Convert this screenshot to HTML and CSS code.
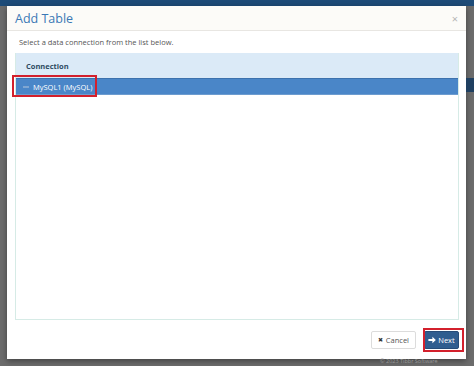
FILE: index.html
```html
<html>
<head>
    <title>Add Table</title>
    <link rel="stylesheet" href="styles.css">
</head>
<body>

<div class="topbar"></div>

<div class="modal">

    <div class="modal-header">
        <h2>Add Table</h2>
        <span class="close">&times;</span>
    </div>

    <div class="modal-body">
        <p class="hint">Select a data connection from the list below.</p>

        <div class="grid">
            <div class="grid-head">Connection</div>
            <div class="grid-row selected">
                <span class="db-icon"></span>
                <span>MySQL1 (MySQL)</span>
            </div>
            <div class="mark mark-row"></div>
        </div>
    </div>

    <div class="modal-footer">
        <button class="btn btn-cancel"><span class="x">&#10006;</span> Cancel</button>
        <button class="btn btn-next">
            <svg class="arrow" width="8" height="8" viewBox="0 0 10 10"><path d="M0.5 3.6h5V0.8L9.8 5 5.5 9.2V6.4h-5z" fill="#fff"/></svg>
            Next
        </button>
        <div class="mark mark-next"></div>
    </div>

</div>

<div class="side-tab"></div>
<div class="bottom-text">&copy; 2023 Tibbr Software</div>

</body>
</html>
```

FILE: styles.css
```css
body
{
    margin: 0;
    width: 474px;
    height: 366px;
    overflow: hidden;
    background-color: #6c6c6c;
    font-family: 'Open Sans', 'DejaVu Sans', sans-serif;
    position: relative;
}

.topbar
{
    height: 6px;
    background-color: #1d4b78;
}

.modal
{
    margin-left: 7px;
    width: 459px;
    height: 353px;
    background-color: #fff;
    display: flex;
    flex-direction: column;
    box-shadow: 0 2px 6px rgba(0, 0, 0, 0.4);
}

.modal-header
{
    height: 24px;
    background-color: #fcfbf8;
    border-bottom: 1px solid #e8e6e2;
    display: flex;
    align-items: center;
    justify-content: space-between;
    padding: 0 8px 0 8px;
}

h2
{
    margin: 0;
    font-size: 12.5px;
    font-weight: 400;
    color: #3a78b5;
}

.close
{
    font-size: 11px;
    color: #b5b5b5;
}

.modal-body
{
    padding: 0 7px 0 8px;
    flex: 1;
}

.hint
{
    margin: 6px 0 5px 4px;
    font-size: 7.5px;
    color: #555;
    line-height: 11px;
}

.grid
{
    position: relative;
    height: 266px;
    border: 1px solid #d6ebe6;
    border-top: none;
}

.grid-head
{
    height: 25px;
    background-color: #dbeaf7;
    font-size: 7.5px;
    font-weight: bold;
    color: #2e4a62;
    display: flex;
    align-items: center;
    padding-left: 10px;
}

.grid-row
{
    height: 15px;
    display: flex;
    align-items: center;
    font-size: 7.5px;
    padding-left: 7px;
    gap: 4px;
}

.selected
{
    background-color: #4a86c8;
    color: #fff;
    border-top: 1px solid #3d72ad;
    border-bottom: 1px solid #6d9ccf;
}

.db-icon
{
    width: 6px;
    height: 2px;
    background-color: #7fa6d2;
}

.mark
{
    position: absolute;
    border: 2px solid #d3202c;
}

.mark-row
{
    left: -4px;
    top: 22px;
    width: 81px;
    height: 18px;
}

.modal-footer
{
    position: relative;
    height: 39px;
    display: flex;
    align-items: center;
    justify-content: flex-end;
    gap: 8px;
    padding-right: 7px;
}

.btn
{
    height: 18px;
    border-radius: 2px;
    font-family: 'Open Sans', sans-serif;
    font-size: 7.5px;
    padding: 0 6px;
    display: flex;
    align-items: center;
    gap: 3px;
}

.btn-cancel
{
    background-color: #fff;
    border: 1px solid #dcdcdc;
    color: #555;
}

.x
{
    font-size: 6px;
    color: #333;
}

.btn-next
{
    background-color: #2f5d8f;
    border: 1px solid #254c78;
    color: #fff;
    width: 35px;
    padding: 0 2px;
    justify-content: center;
    gap: 2px;
}

.arrow
{
    flex-shrink: 0;
}

.mark-next
{
    right: 2px;
    top: 8px;
    width: 37px;
    height: 20px;
}

.side-tab
{
    position: absolute;
    right: 0;
    top: 78px;
    width: 8px;
    height: 14px;
    background-color: #1f3f60;
}

.bottom-text
{
    position: absolute;
    left: 380px;
    top: 358px;
    font-size: 5.5px;
    line-height: 7px;
    color: #9a9a9a;
}
```
